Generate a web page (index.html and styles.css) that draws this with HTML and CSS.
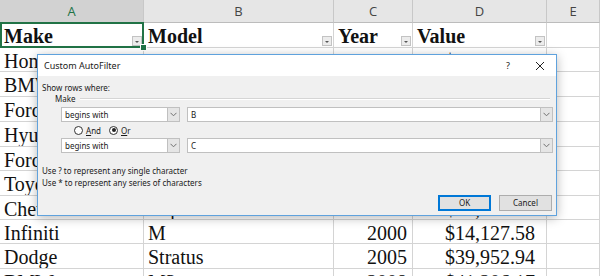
FILE: index.html
```html
<!DOCTYPE html>
<html>
<head>
<meta charset="utf-8">
<link rel="stylesheet" href="styles.css">
</head>
<body>
<div class="sheet">
  <div class="grid">
    <div class="ch sel-col">A</div>
    <div class="ch">B</div>
    <div class="ch">C</div>
    <div class="ch">D</div>
    <div class="ch">E</div>

    <div class="c hd active">Make<span class="fb"></span><span class="handle"></span></div>
    <div class="c hd">Model<span class="fb"></span></div>
    <div class="c hd">Year<span class="fb"></span></div>
    <div class="c hd">Value<span class="fb"></span></div>
    <div class="c"></div>

    <div class="c">Honda</div><div class="c">Civic</div><div class="c num">2002</div><div class="c cur">$12,410.20</div><div class="c"></div>
    <div class="c">BMW</div><div class="c">X5</div><div class="c num">2007</div><div class="c cur">$31,882.50</div><div class="c"></div>
    <div class="c">Ford</div><div class="c">Focus</div><div class="c num">2004</div><div class="c cur">$10,250.11</div><div class="c"></div>
    <div class="c">Hyundai</div><div class="c">Sonata</div><div class="c num">2006</div><div class="c cur">$17,320.45</div><div class="c"></div>
    <div class="c">Ford</div><div class="c">Mustang</div><div class="c num">2001</div><div class="c cur">$22,912.07</div><div class="c"></div>
    <div class="c">Toyota</div><div class="c">Camry</div><div class="c num">2003</div><div class="c cur">$16,540.33</div><div class="c"></div>
    <div class="c">Chevrolet</div><div class="c">Impala</div><div class="c num">1999</div><div class="c cur">$11,745.76</div><div class="c"></div>
    <div class="c">Infiniti</div><div class="c">M</div><div class="c num">2000</div><div class="c cur">$14,127.58</div><div class="c"></div>
    <div class="c">Dodge</div><div class="c">Stratus</div><div class="c num">2005</div><div class="c cur">$39,952.94</div><div class="c"></div>
    <div class="c">BMW</div><div class="c">M3</div><div class="c num">2008</div><div class="c cur">$41,206.17</div><div class="c"></div>
  </div>

  <div class="dialog">
    <div class="titlebar">
      <span class="title">Custom AutoFilter</span>
      <span class="help">?</span>
      <svg class="close" width="10" height="10" viewBox="0 0 10 10"><path d="M1 1L9 9M9 1L1 9" stroke="#222" stroke-width="1" fill="none"/></svg>
    </div>
    <div class="body">
      <div class="line">Show rows where:</div>
      <div class="group"><span class="glabel">Make</span><span class="groove"></span></div>
      <div class="crow">
        <div class="combo op"><span class="val">begins with</span><span class="dd"><svg width="7" height="5" viewBox="0 0 7 5"><path d="M0.5 0.8L3.5 3.8L6.5 0.8" stroke="#707070" fill="none"/></svg></span></div>
        <div class="combo txt"><span class="val">B</span><span class="dd"><svg width="7" height="5" viewBox="0 0 7 5"><path d="M0.5 0.8L3.5 3.8L6.5 0.8" stroke="#707070" fill="none"/></svg></span></div>
      </div>
      <div class="radios">
        <span class="radio"></span><span class="rl"><u>A</u>nd</span>
        <span class="radio on"></span><span class="rl"><u>O</u>r</span>
      </div>
      <div class="crow">
        <div class="combo op"><span class="val">begins with</span><span class="dd"><svg width="7" height="5" viewBox="0 0 7 5"><path d="M0.5 0.8L3.5 3.8L6.5 0.8" stroke="#707070" fill="none"/></svg></span></div>
        <div class="combo txt"><span class="val">C</span><span class="dd"><svg width="7" height="5" viewBox="0 0 7 5"><path d="M0.5 0.8L3.5 3.8L6.5 0.8" stroke="#707070" fill="none"/></svg></span></div>
      </div>
      <div class="hints">
        <div class="hint">Use ? to represent any single character</div>
        <div class="hint">Use * to represent any series of characters</div>
      </div>
      <div class="buttons">
        <div class="btn ok">OK</div>
        <div class="btn">Cancel</div>
      </div>
    </div>
  </div>
</div>
</body>
</html>
```

FILE: styles.css
```css
html, body {
  margin: 0;
  padding: 0;
  background: #ffffff;
}
.sheet {
  position: relative;
  width: 600px;
  height: 276px;
  overflow: hidden;
  background: #ffffff;
}
.grid {
  display: grid;
  grid-template-columns: 144px 190px 79px 134px 53px;
  grid-template-rows: 23px 25px 24px 25px 25px 25px 24px 25px 24px 24px 25px 25px;
}
.ch {
  box-sizing: border-box;
  background: #e6e6e6;
  border-right: 1px solid #c8c8c8;
  border-bottom: 1px solid #bcbcbc;
  font-family: "Open Sans", "Noto Sans", sans-serif;
  font-size: 13px;
  color: #444444;
  text-align: center;
  line-height: 23px;
}
.ch.sel-col {
  background: #d2d2d2;
  color: #217346;
  border-bottom: 1px solid #ababab;
}
.c {
  position: relative;
  box-sizing: border-box;
  border-right: 1px solid #d4d4d4;
  border-bottom: 1px solid #d4d4d4;
  font-family: "Liberation Serif", "DejaVu Serif", serif;
  font-size: 20px;
  color: #111111;
  padding: 2px 4px 0 4px;
  white-space: nowrap;
  overflow: hidden;
  line-height: 23px;
}
.c.hd {
  font-weight: bold;
  overflow: visible;
}
.c.num { text-align: right; padding-right: 5px; }
.c.cur { text-align: right; padding-right: 11px; }
.c.active {
  z-index: 2;
}
.c.active::after {
  content: "";
  position: absolute;
  left: 0; top: -1px; right: -1px; bottom: -1px;
  border: 2px solid #217346;
  pointer-events: none;
}
.handle {
  position: absolute;
  right: -4px;
  bottom: -4px;
  width: 5px;
  height: 5px;
  background: #217346;
  border: 1px solid #ffffff;
  z-index: 3;
}
.fb {
  position: absolute;
  right: 1px;
  bottom: 1px;
  width: 10px;
  height: 10px;
  box-sizing: border-box;
  background: #ececec;
  border: 1px solid #c3c3c3;
}
.fb::after {
  content: "";
  position: absolute;
  left: 2px;
  top: 4px;
  border-left: 2px solid transparent;
  border-right: 2px solid transparent;
  border-top: 2px solid #555555;
}

/* dialog */
.dialog {
  position: absolute;
  left: 37px;
  top: 54px;
  width: 520px;
  height: 162px;
  box-sizing: border-box;
  border: 1px solid #5fa2dd;
  background: #f0f0f0;
  box-shadow: 0 2px 10px rgba(0,0,0,0.28);
  font-family: "Noto Sans", "Open Sans", sans-serif;
  font-size: 8px;
  color: #1a1a1a;
  z-index: 10;
}
.titlebar {
  height: 21px;
  background: #ffffff;
  display: flex;
  align-items: center;
  padding-left: 6px;
}
.title {
  font-size: 9px;
  flex: 1;
}
.help {
  font-size: 9px;
  margin-right: 25px;
}
.close {
  margin-right: 11px;
}
.body {
  padding: 6px 0 0 4px;
}
.line {
  height: 11px;
  line-height: 11px;
}
.group {
  display: flex;
  align-items: center;
  height: 11px;
  padding-left: 13px;
}
.glabel {
  line-height: 11px;
  margin-right: 4px;
}
.groove {
  flex: 1;
  height: 0;
  border-top: 1px solid #d5d5d5;
  border-bottom: 1px solid #ffffff;
  margin-right: 6px;
}
.crow {
  display: flex;
  margin-top: 3px;
  padding-left: 19px;
  height: 15px;
}
.radios + .crow {
  margin-top: 0;
}
.combo {
  box-sizing: border-box;
  height: 15px;
  display: flex;
  background: #ffffff;
  border: 1px solid #c0c0c0;
}
.combo.op { width: 119px; }
.combo.txt { width: 366px; margin-left: 7px; }
.val {
  flex: 1;
  padding-left: 3px;
  line-height: 13px;
}
.dd {
  width: 12px;
  box-sizing: border-box;
  background: #e5e5e5;
  border-left: 1px solid #c0c0c0;
  display: flex;
  align-items: center;
  justify-content: center;
}
.radios {
  display: flex;
  align-items: center;
  height: 16px;
  padding-left: 32px;
}
.radio {
  width: 9px;
  height: 9px;
  box-sizing: border-box;
  border: 1px solid #333333;
  border-radius: 50%;
  background: #ffffff;
  position: relative;
}
.radio.on::after {
  content: "";
  position: absolute;
  left: 1.5px;
  top: 1.5px;
  width: 4px;
  height: 4px;
  border-radius: 50%;
  background: #222222;
}
.rl {
  margin-left: 3px;
  margin-right: 8px;
}
.hints {
  margin-top: 12px;
}
.hint {
  height: 12px;
  line-height: 12px;
}
.buttons {
  display: flex;
  justify-content: flex-end;
  gap: 8px;
  margin-top: 6px;
  padding-right: 4px;
}
.btn {
  box-sizing: border-box;
  width: 53px;
  height: 16px;
  background: #e1e1e1;
  border: 1px solid #adadad;
  text-align: center;
  line-height: 14px;
}
.btn.ok {
  border: 1px solid #0078d7;
  box-shadow: inset 0 0 0 1px #0078d7;
}
```
